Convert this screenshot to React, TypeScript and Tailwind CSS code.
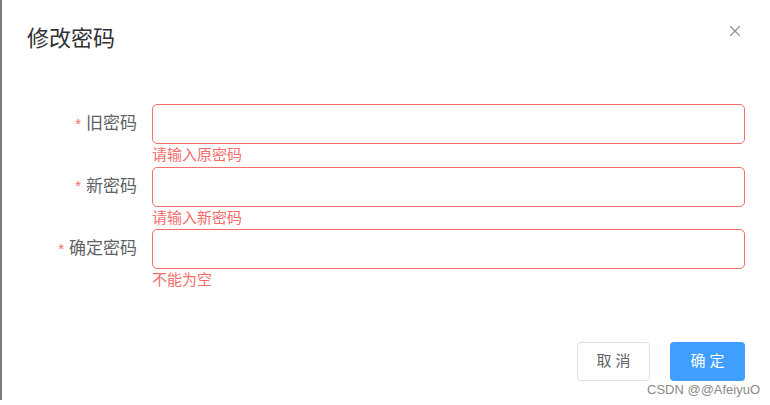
import { X } from 'lucide-react'

const fields = [
  { label: '旧密码', error: '请输入原密码' },
  { label: '新密码', error: '请输入新密码' },
  { label: '确定密码', error: '不能为空' },
]

export default function App() {
  return (
    <div
      className="relative flex w-[770px] h-[405px] bg-white overflow-hidden"
      style={{ fontFamily: '"Liberation Sans", "Noto Sans CJK SC", sans-serif' }}
    >
      {/* left edge of the page behind the dialog */}
      <div className="w-[2px] h-[400px] bg-[#7b7b7b] shrink-0" />

      <div className="flex-1 flex flex-col">
        {/* Header */}
        <div className="flex items-start justify-between pl-[25px] pr-[26px] pt-[25px]">
          <div className="text-[22px] leading-[28px] text-[#303133]">修改密码</div>
          <X size={18} strokeWidth={1.6} className="text-[#909399] mt-[-3px]" />
        </div>

        {/* Form */}
        <div className="flex flex-col pt-[51px] pr-[25px]">
          {fields.map((f) => (
            <div key={f.label} className="flex">
              <div className="w-[150px] shrink-0 pr-[15px] h-[40px] flex items-center justify-end text-[17px] text-[#606266]">
                <span className="text-[#f56c6c] text-[15px] mr-[5px]">*</span>
                {f.label}
              </div>
              <div className="flex-1 flex flex-col">
                <div className="h-[40px] border border-[#f56c6c] rounded-[5px]" />
                <div className="h-[22.5px] pt-[3px] text-[15px] leading-none text-[#f56c6c]">{f.error}</div>
              </div>
            </div>
          ))}
        </div>

        {/* Footer */}
        <div className="flex justify-end gap-[20px] pr-[25px] mt-[50px]">
          <button className="w-[73px] h-[39px] border border-[#dcdfe6] rounded-[4px] text-[15px] text-[#606266] bg-white">
            取 消
          </button>
          <button className="w-[75px] h-[39px] rounded-[4px] text-[15px] text-white bg-[#409eff]">
            确 定
          </button>
        </div>
      </div>

      {/* watermark */}
      <div className="absolute left-[647px] top-[380px] text-[13px] text-[#8a8a8a]">CSDN @@AfeiyuO</div>
    </div>
  )
}
